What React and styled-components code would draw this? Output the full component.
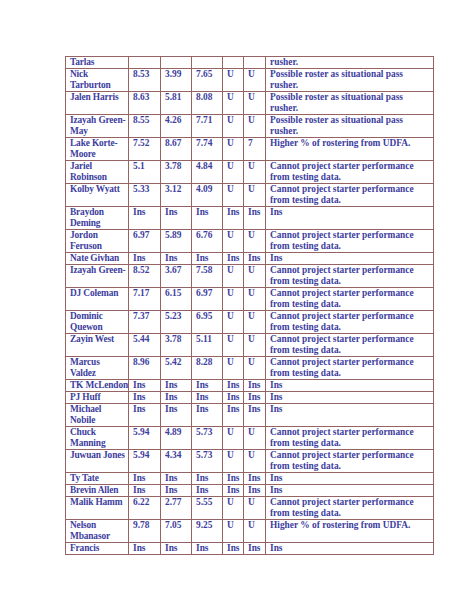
import React from 'react';
import styled, { createGlobalStyle } from 'styled-components';

const GlobalStyle = createGlobalStyle`
  html, body {
    margin: 0;
    padding: 0;
    background: #ffffff;
  }
`;

const Page = styled.div`
  width: 474px;
  height: 613px;
  box-sizing: border-box;
  padding: 56px 0 0 65px;
  background: #ffffff;
`;

const Table = styled.table`
  border-collapse: collapse;
  table-layout: fixed;
  width: 368px;
  border: 1.5px solid #946464;
  font-family: 'Liberation Serif', 'Times New Roman', serif;
  font-weight: bold;
  font-size: 9.4px;
  line-height: 11px;
  color: #3d3d9e;
`;

const Cell = styled.td`
  border: 1.5px solid #946464;
  padding: 0 0 0 4px;
  vertical-align: top;
  white-space: pre;
  overflow: hidden;
  text-align: left;
  letter-spacing: ${(p) => (p.$tight ? '-0.15px' : '0')};
`;

const cols = [63, 32, 31, 31, 21, 22, 168];

const POSS = 'Possible roster as situational pass\nrusher.';
const CANT = 'Cannot project starter performance\nfrom testing data.';
const HIGH = 'Higher % of rostering from UDFA.';
const INS = ['Ins', 'Ins', 'Ins', 'Ins', 'Ins', 'Ins'];

const rows = [
  ['Tarlas', '', '', '', '', '', 'rusher.'],
  ['Nick\nTarburton', '8.53', '3.99', '7.65', 'U', 'U', POSS],
  ['Jalen Harris', '8.63', '5.81', '8.08', 'U', 'U', POSS],
  ['Izayah Green-\nMay', '8.55', '4.26', '7.71', 'U', 'U', POSS],
  ['Lake Korte-\nMoore', '7.52', '8.67', '7.74', 'U', '7', HIGH],
  ['Jariel\nRobinson', '5.1', '3.78', '4.84', 'U', 'U', CANT],
  ['Kolby Wyatt', '5.33', '3.12', '4.09', 'U', 'U', CANT],
  ['Braydon\nDeming', ...INS],
  ['Jordon\nFeruson', '6.97', '5.89', '6.76', 'U', 'U', CANT],
  ['Nate Givhan', ...INS],
  ['Izayah Green-', '8.52', '3.67', '7.58', 'U', 'U', CANT],
  ['DJ Coleman', '7.17', '6.15', '6.97', 'U', 'U', CANT],
  ['Dominic\nQuewon', '7.37', '5.23', '6.95', 'U', 'U', CANT],
  ['Zayin West', '5.44', '3.78', '5.11', 'U', 'U', CANT],
  ['Marcus\nValdez', '8.96', '5.42', '8.28', 'U', 'U', CANT],
  ['TK McLendon', ...INS],
  ['PJ Huff', ...INS],
  ['Michael\nNobile', ...INS],
  ['Chuck\nManning', '5.94', '4.89', '5.73', 'U', 'U', CANT],
  ['Juwuan Jones', '5.94', '4.34', '5.73', 'U', 'U', CANT],
  ['Ty Tate', ...INS],
  ['Brevin Allen', ...INS],
  ['Malik Hamm', '6.22', '2.77', '5.55', 'U', 'U', CANT],
  ['Nelson\nMbanasor', '9.78', '7.05', '9.25', 'U', 'U', HIGH],
  ['Francis', ...INS],
];

const App = () => (
  <Page>
    <GlobalStyle />
    <Table>
      <colgroup>
        {cols.map((w, i) => (
          <col key={i} style={{ width: w }} />
        ))}
      </colgroup>
      <tbody>
        {rows.map((row, r) => (
          <tr key={r}>
            {row.map((text, c) => (
              <Cell key={c} $tight={c === 0}>{text}</Cell>
            ))}
          </tr>
        ))}
      </tbody>
    </Table>
  </Page>
);

export default App;
